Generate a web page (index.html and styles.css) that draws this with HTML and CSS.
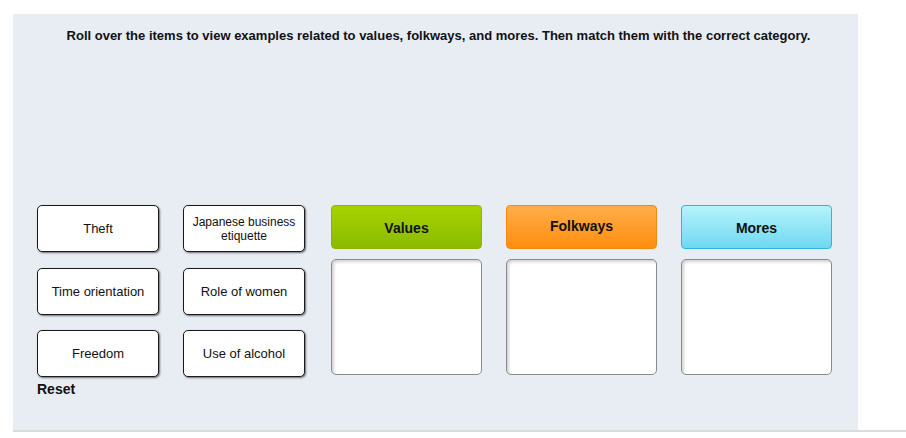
FILE: index.html
```html
<!DOCTYPE html>
<html>
<head>
<meta charset="utf-8">
<link rel="stylesheet" href="styles.css">
</head>
<body>
<div class="frame">
  <div class="panel">
    <p class="title">Roll over the items to view examples related to values, folkways, and mores. Then match them with the correct category.</p>
    <div class="main">
      <div class="left">
        <div class="items">
          <div class="item">Theft</div>
          <div class="item small">Japanese business etiquette</div>
          <div class="item">Time orientation</div>
          <div class="item">Role of women</div>
          <div class="item">Freedom</div>
          <div class="item">Use of alcohol</div>
        </div>
        <div class="reset">Reset</div>
      </div>
      <div class="cats">
        <div class="cat">
          <div class="head values">Values</div>
          <div class="drop"></div>
        </div>
        <div class="cat">
          <div class="head folkways">Folkways</div>
          <div class="drop"></div>
        </div>
        <div class="cat">
          <div class="head mores">Mores</div>
          <div class="drop"></div>
        </div>
      </div>
    </div>
  </div>
</div>
</body>
</html>
```
FILE: styles.css
```css
html, body {
  margin: 0;
  padding: 0;
  background: #ffffff;
  font-family: "Liberation Sans", Arial, sans-serif;
  color: #000;
}
.frame {
  margin: 14px 0 0 13px;
  border-bottom: 2px solid #dcdcdc;
}
.panel {
  width: 845px;
  height: 416px;
  background: #e8edf4;
  box-sizing: border-box;
  padding: 14px 0 0 24px;
}
.title {
  margin: 0 18px 0 0;
  font-size: 13px;
  font-weight: bold;
  line-height: 15px;
  text-align: center;
  color: #111;
}
.main {
  display: flex;
  margin-top: 162px;
}
.left {
  width: 269px;
  margin-right: 25px;
}
.items {
  display: grid;
  grid-template-columns: 122px 122px;
  grid-auto-rows: 47px;
  column-gap: 24px;
  row-gap: 15.5px;
}
.item {
  box-sizing: border-box;
  background: #fff;
  border: 1px solid #1a1a1a;
  border-radius: 5px;
  box-shadow: 1px 1px 2px rgba(0,0,0,0.55);
  display: flex;
  align-items: center;
  justify-content: center;
  text-align: center;
  font-size: 13px;
  line-height: 14px;
  padding: 1px 1px 0;
  color: #111;
}
.item.small {
  font-size: 12px;
  line-height: 14px;
  padding-top: 1px;
  padding-bottom: 0;
}
.reset {
  margin-top: 4px;
  font-size: 14px;
  font-weight: bold;
  line-height: 16px;
  color: #111;
}
.cats {
  display: flex;
  gap: 24px;
}
.cat {
  width: 151px;
}
.head {
  box-sizing: border-box;
  height: 44px;
  border-radius: 4px;
  border: 1px solid;
  display: flex;
  align-items: center;
  justify-content: center;
  font-size: 14px;
  font-weight: bold;
  color: #111;
  padding-top: 2px;
}
.values {
  background: linear-gradient(#a6d300, #8abb00);
  border-color: #8eb400;
}
.folkways {
  background: linear-gradient(#ffad4a, #ff8e0e);
  border-color: #f08a10;
  padding-top: 0;
  padding-bottom: 3px;
}
.mores {
  background: linear-gradient(#b6f3fb, #6fd8f2);
  border-color: #2fb6de;
}
.drop {
  box-sizing: border-box;
  height: 116px;
  margin-top: 10px;
  background: #fff;
  border: 1px solid #8a8a8a;
  border-radius: 5px;
  box-shadow: inset 2px 2px 3px rgba(0,0,0,0.18);
}
```
